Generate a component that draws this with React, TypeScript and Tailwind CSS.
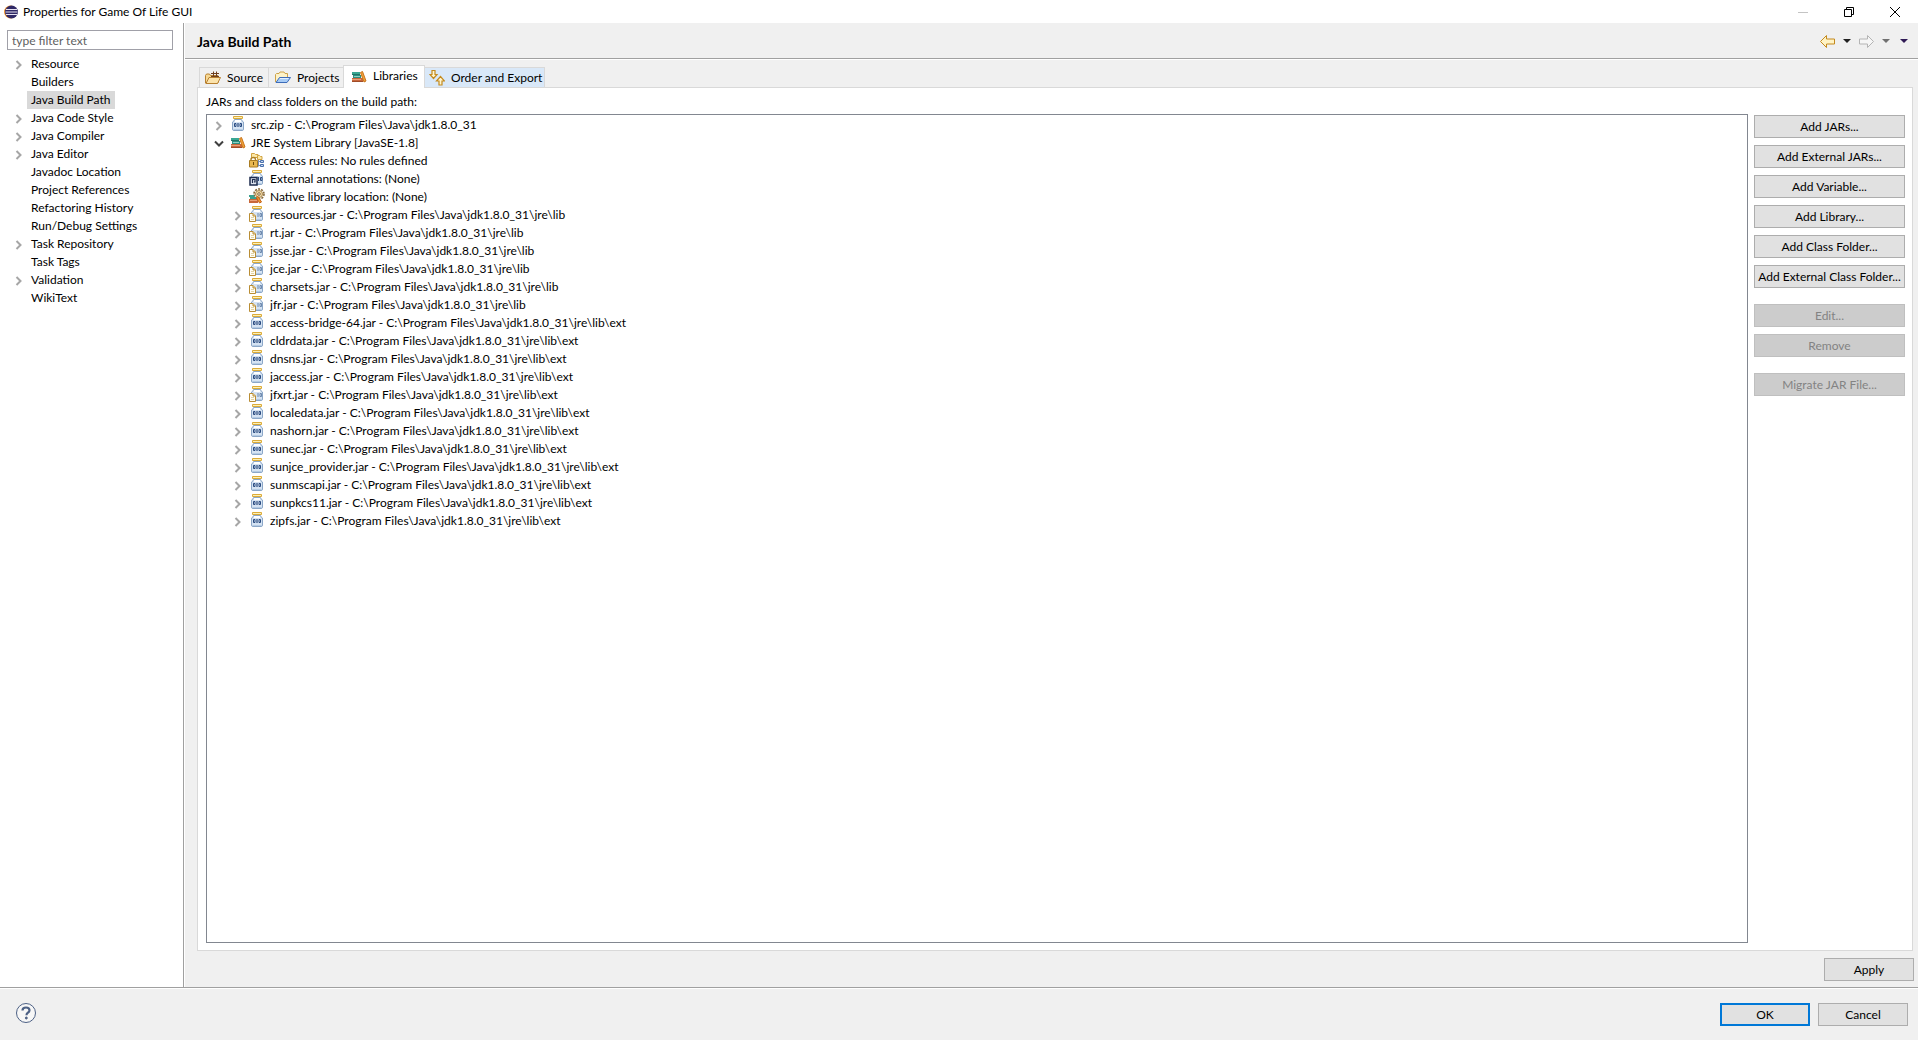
import type { ReactNode } from "react";

type Category = { label: string; expandable?: boolean; selected?: boolean };

const categories: Category[] = [
  { label: "Resource", expandable: true },
  { label: "Builders" },
  { label: "Java Build Path", selected: true },
  { label: "Java Code Style", expandable: true },
  { label: "Java Compiler", expandable: true },
  { label: "Java Editor", expandable: true },
  { label: "Javadoc Location" },
  { label: "Project References" },
  { label: "Refactoring History" },
  { label: "Run/Debug Settings" },
  { label: "Task Repository", expandable: true },
  { label: "Task Tags" },
  { label: "Validation", expandable: true },
  { label: "WikiText" },
];

const LIB = "C:\\Program Files\\Java\\jdk1.8.0_31\\jre\\lib";
const EXT = LIB + "\\ext";

const jars = [
  { name: "resources.jar", path: LIB, source: true },
  { name: "rt.jar", path: LIB, source: true },
  { name: "jsse.jar", path: LIB, source: true },
  { name: "jce.jar", path: LIB, source: true },
  { name: "charsets.jar", path: LIB, source: true },
  { name: "jfr.jar", path: LIB, source: true },
  { name: "access-bridge-64.jar", path: EXT },
  { name: "cldrdata.jar", path: EXT },
  { name: "dnsns.jar", path: EXT },
  { name: "jaccess.jar", path: EXT },
  { name: "jfxrt.jar", path: EXT, source: true },
  { name: "localedata.jar", path: EXT },
  { name: "nashorn.jar", path: EXT },
  { name: "sunec.jar", path: EXT },
  { name: "sunjce_provider.jar", path: EXT },
  { name: "sunmscapi.jar", path: EXT },
  { name: "sunpkcs11.jar", path: EXT },
  { name: "zipfs.jar", path: EXT },
];

function Icon({ children }: { children: ReactNode }) {
  return (
    <svg width="16" height="16" viewBox="0 0 16 16" fill="none" className="shrink-0" aria-hidden="true">
      {children}
    </svg>
  );
}

function JarShape() {
  return (
    <>
      <path d="M4.500 3.500h7q0 1.500 2 2.500v7q0 1.500-1.500 1.500h-8q-1.500 0-1.500-1.500V6q2-1 2-2.500z" fill="#d5e3f3" stroke="#8ba7c8" />
      <path d="M5 5h6" stroke="#fff" strokeWidth="2" />
      <path d="M4 13.500h8" stroke="#b4cbe4" />
      <path d="M3.500.5h9v2h-9z" fill="#fdf0b4" stroke="#dcab38" />
    </>
  );
}

function JarIcon() {
  return (
    <Icon>
      <JarShape />
      <path d="M4.500 7.500h1.500v3H4.500zM10 7.500h1.500v3H10z" stroke="#2a4b80" />
      <path d="M8 7v4" stroke="#2a4b80" strokeWidth="1.200" />
    </Icon>
  );
}

function JarSourceIcon() {
  return (
    <Icon>
      <JarShape />
      <path d="M11 7.500h1.500v3H11zM9 7v4" stroke="#6d88ad" />
      <path d="M.5 7.500H4L6.500 10v5.500h-6z" fill="#fffdf4" stroke="#b98d34" />
      <path d="M4 7.500V10h2.500" fill="#f3dfa6" stroke="#b98d34" />
      <path d="M2 11.500h3M2 13.500h3" stroke="#e2d3a4" />
    </Icon>
  );
}

function AnnotationIcon() {
  return (
    <Icon>
      <JarShape />
      <path d="M11.500 7.500H13v3h-1.500zM9.500 7v4" stroke="#2a4b80" />
      <path d="M1 7.500h7V15H1z" fill="#dfe5ef" stroke="#1c2b4e" strokeWidth="1.500" />
      <path d="M3.500 13V9.500h2.500v2.500H5" stroke="#1c2b4e" strokeWidth="1.200" />
    </Icon>
  );
}

function LibraryIcon() {
  return (
    <Icon>
      <path d="M1 4h8v3H1z" fill="#3aa793" />
      <path d="M1 6.500h8" stroke="#1f7567" />
      <path d="M2 7h8v3H2z" fill="#2d8f80" />
      <path d="M3 8.500h6" stroke="#8dd0c3" />
      <path d="M1 10h11v4H1z" fill="#c7673c" />
      <path d="M1 11.500h9" stroke="#e9a17a" />
      <path d="M1 13.500h11" stroke="#a04c28" />
      <path d="M9.500 4.500l2-1 3.500 9.500-2 1z" fill="#f0a23a" stroke="#c9741b" />
    </Icon>
  );
}

function AccessIcon() {
  return (
    <Icon>
      <path d="M2.500 1.500h3l1 1H9v3H2.500z" fill="#fce7a6" stroke="#d0a240" />
      <path d="M8.500 3.500h2l1 1H13v3H8.500z" fill="#fce7a6" stroke="#d0a240" />
      <path d="M9.500 8v6.500M9.500 9.500h2M9.500 13.500h2" stroke="#7b90b5" />
      <path d="M11.500 8.500h3v2h-3zM11.500 12.500h3v2h-3z" fill="#c3d6f0" stroke="#4a70ad" />
      <path d="M2 9V7.500Q2 5.500 4.250 5.500t2.250 2V9" stroke="#ad8026" strokeWidth="1.400" />
      <path d="M.5 8.500h8v6.500h-8z" fill="#e9b850" stroke="#a97c22" />
      <path d="M4.500 10v3" stroke="#6d4a0c" />
    </Icon>
  );
}

function NativeIcon() {
  return (
    <Icon>
      <circle cx="10" cy="6" r="5" stroke="#86683a" strokeWidth="1.600" strokeDasharray="2 1.140" />
      <circle cx="10" cy="6" r="3.500" fill="#f1dba8" stroke="#a9854a" />
      <circle cx="10" cy="6" r="1.300" fill="#fff" stroke="#86683a" />
      <path d="M0 7h5v2H0zM1 9h6v2H1z" fill="#3aa08f" />
      <path d="M0 11h9v4H0z" fill="#c8683a" />
      <path d="M1 12.500h7" stroke="#e9a17a" />
      <path d="M7.500 9.500l1.500-1 3.500 5.500-2 1z" fill="#f59a32" stroke="#c4651b" />
    </Icon>
  );
}

function SourceTabIcon() {
  return (
    <Icon>
      <path d="M.5 13V5.500l1-1.500h3l1 1.500H13v7.500z" fill="#f6d894" stroke="#b8802f" />
      <path d="M6 3.500h8M6 6.500h8M8.500 1.500v6M11.500 1.500v6" stroke="#6e4020" />
      <path d="M1 13.500l3-6h11.500l-3 6z" fill="#fbe3ac" stroke="#b8802f" />
    </Icon>
  );
}

function ProjectsTabIcon() {
  return (
    <Icon>
      <path d="M.5 12V4.500l1-1H4l1-1.500h4l1 1.500h2.500V8" fill="#fdf2c8" stroke="#cda24a" />
      <path d="M1 12.500l3.500-5h11l-3.500 5z" fill="#a8ccf6" stroke="#3d6cb9" />
      <path d="M5 8.500h8.500" stroke="#e3f0ff" />
    </Icon>
  );
}

function OrderTabIcon() {
  return (
    <Icon>
      <path d="M3 .5h3v4h2L4.500 8.500 1 4.500h2z" fill="#fff6cf" stroke="#c48a1e" strokeWidth="1.200" />
      <path d="M10 15h3v-4h2.500l-4-4.500-4 4.500H10z" fill="#fff6cf" stroke="#c48a1e" strokeWidth="1.200" />
    </Icon>
  );
}

function EclipseIcon() {
  return (
    <svg width="14" height="14" viewBox="0 0 14 14" className="shrink-0" aria-hidden="true">
      <circle cx="6.500" cy="7" r="6.500" fill="#f0932b" />
      <circle cx="7.500" cy="7" r="6.500" fill="#2f2866" />
      <path d="M2 4.500h11M1.500 7h12M2 9.500h11" stroke="#e6e2f2" />
    </svg>
  );
}

function Twisty({ open, name }: { open?: boolean; name: string }) {
  return (
    <button aria-label={(open ? "Collapse " : "Expand ") + name} className="w-4 h-[18px] pt-[2px] flex items-center justify-center shrink-0">
      <svg width="10" height="10" viewBox="0 0 10 10" fill="none" strokeWidth="2">
        {open ? <path d="M1 2.500l4 4 4-4" stroke="#404040" /> : <path d="M2.500 1l4 4-4 4" stroke="#a6a6a6" />}
      </svg>
    </button>
  );
}

function TreeRow({ icon, label, twisty }: { icon: ReactNode; label: string; twisty?: "open" | "closed" }) {
  return (
    <div className="flex items-center h-[18px]">
      {twisty ? <Twisty open={twisty === "open"} name={label} /> : <span className="w-4 shrink-0" />}
      <span className="ml-[3px] mr-[5px] self-start">{icon}</span>
      <span className="whitespace-pre">{label}</span>
    </div>
  );
}

function PushButton({ label, disabled, className = "" }: { label: string; disabled?: boolean; className?: string }) {
  return (
    <button
      disabled={disabled}
      className={"h-[23px] bg-[#e1e1e1] border border-[#adadad] whitespace-nowrap disabled:bg-[#cccccc] disabled:border-[#bfbfbf] disabled:text-[#838383] " + className}
    >
      {label}
    </button>
  );
}

function Tab({ icon, label, selected, className }: { icon: ReactNode; label: string; selected?: boolean; className: string }) {
  return (
    <button role="tab" aria-selected={!!selected} className={"flex items-center gap-[6px] border-[#d9d9d9] whitespace-nowrap " + className}>
      {icon}
      {label}
    </button>
  );
}

function TitleBar() {
  return (
    <header className="h-[23px] flex items-center justify-between bg-white shrink-0">
      <div className="flex items-center gap-[5px] pl-1">
        <EclipseIcon />
        <h1>Properties for Game Of Life GUI</h1>
      </div>
      <div className="flex">
        <button aria-label="Minimize" className="w-[46px] h-5 flex items-center justify-center">
          <svg width="10" height="10" stroke="#c4c4c4"><path d="M0 5.500h10" /></svg>
        </button>
        <button aria-label="Restore" className="w-[46px] h-5 flex items-center justify-center">
          <svg width="10" height="10" fill="none" stroke="#000"><path d="M.5 2.500h7v7h-7zM2.500 2.500v-2h7v7h-2" /></svg>
        </button>
        <button aria-label="Close" className="w-[46px] h-5 flex items-center justify-center">
          <svg width="10" height="10" stroke="#000"><path d="M0 0l10 10M10 0L0 10" /></svg>
        </button>
      </div>
    </header>
  );
}

function Caret({ color, name }: { color: string; name: string }) {
  return (
    <button aria-label={name} className="flex">
      <svg width="8" height="4" fill={color}><path d="M0 0h8l-4 4z" /></svg>
    </button>
  );
}

function Sidebar() {
  return (
    <nav className="w-[184px] shrink-0 bg-white border-r border-[#a0a0a0]">
      <div className="pl-[7px] pt-[7px] pr-[10px]">
        <input type="text" aria-label="Filter" placeholder="type filter text" className="block w-full h-5 border border-[#a0a0a8] px-1 placeholder:text-[#606060]" />
      </div>
      <ul className="pt-[5px] pl-[11px]">
        {categories.map((c) => (
          <li key={c.label} className="flex items-center h-[18px]">
            {c.expandable ? <Twisty name={c.label} /> : <span className="w-4 shrink-0" />}
            <a href="#" className={c.selected ? "px-1 bg-[#d9d9d9] leading-[18px]" : "px-1 leading-[18px]"}>{c.label}</a>
          </li>
        ))}
      </ul>
    </nav>
  );
}

function LibraryTree() {
  return (
    <div className="flex-1 border border-[#828790] bg-white pt-px pl-1">
      <TreeRow twisty="closed" icon={<JarIcon />} label={"src.zip - C:\\Program Files\\Java\\jdk1.8.0_31"} />
      <TreeRow twisty="open" icon={<LibraryIcon />} label="JRE System Library [JavaSE-1.8]" />
      <div className="pl-[19px]">
        <TreeRow icon={<AccessIcon />} label="Access rules: No rules defined" />
        <TreeRow icon={<AnnotationIcon />} label="External annotations: (None)" />
        <TreeRow icon={<NativeIcon />} label="Native library location: (None)" />
        {jars.map((jar) => (
          <TreeRow key={jar.name} twisty="closed" icon={jar.source ? <JarSourceIcon /> : <JarIcon />} label={jar.name + " - " + jar.path} />
        ))}
      </div>
    </div>
  );
}

export default function App() {
  return (
    <div className="min-h-screen flex flex-col bg-[#f0f0f0] text-black text-[12px] leading-4 font-['Lato',sans-serif]">
      <TitleBar />
      <div className="flex-1 flex">
        <Sidebar />
        <main className="flex-1 flex flex-col border-l border-white">
          <div className="h-9 flex items-center justify-between pl-3 pt-px pr-[10px] border-b border-[#a0a0a0]">
            <h2 className="font-bold text-[14px] pt-[2px]">Java Build Path</h2>
            <div className="flex items-center">
              <button aria-label="Back" className="mr-2">
                <svg width="15" height="13" fill="#fff3c4" stroke="#c48a1e"><path d="M.5 6.500l6-6v3.500h8v5h-8v3.500z" /></svg>
              </button>
              <Caret color="#202020" name="Back history" />
              <button aria-label="Forward" className="ml-2 mr-2">
                <svg width="15" height="13" fill="#f6f6f6" stroke="#b4b4b4"><path d="M14.500 6.500l-6-6v3.500h-8v5h8v3.500z" /></svg>
              </button>
              <Caret color="#707070" name="Forward history" />
              <span className="w-[10px]" />
              <Caret color="#2f1a55" name="View menu" />
            </div>
          </div>
          <div className="flex-1 flex flex-col border-t border-white pt-[5px] pl-3 pr-[5px]">
            <div role="tablist" className="flex items-end h-[23px] pl-[2px] -mb-px relative">
              <Tab label="Source" icon={<SourceTabIcon />} className="h-[21px] w-[69px] pl-[5px] border-t border-l" />
              <Tab label="Projects" icon={<ProjectsTabIcon />} className="h-[21px] w-[75px] pl-[6px] border-t border-l" />
              <Tab label="Libraries" selected icon={<LibraryIcon />} className="h-[23px] w-[82px] pl-[7px] pb-[3px] border-t border-x bg-white" />
              <Tab label="Order and Export" icon={<OrderTabIcon />} className="h-[21px] w-[120px] pl-[4px] border-y border-r bg-[#d9e8f8]" />
            </div>
            <section className="flex-1 flex flex-col bg-white border border-[#d9d9d9] pt-[6px] pl-2 pr-[7px] pb-[7px]">
              <p className="h-5 leading-4">JARs and class folders on the build path:</p>
              <div className="flex-1 flex gap-[6px]">
                <LibraryTree />
                <div className="w-[151px] flex flex-col gap-[7px] pt-px">
                  <PushButton label="Add JARs..." />
                  <PushButton label="Add External JARs..." />
                  <PushButton label="Add Variable..." />
                  <PushButton label="Add Library..." />
                  <PushButton label="Add Class Folder..." />
                  <PushButton label="Add External Class Folder..." />
                  <PushButton label="Edit..." disabled className="mt-[9px]" />
                  <PushButton label="Remove" disabled />
                  <PushButton label="Migrate JAR File..." disabled className="mt-[9px]" />
                </div>
              </div>
            </section>
          </div>
          <div className="flex justify-end pt-[7px] pb-[6px] pr-1">
            <PushButton label="Apply" className="w-[90px]" />
          </div>
        </main>
      </div>
      <footer className="border-t border-[#a0a0a0]">
        <div className="h-[52px] flex items-start border-t border-white pt-[14px] pl-4 pr-[10px] gap-2">
          <button aria-label="Help" className="mr-auto">
            <svg width="20" height="20" viewBox="0 0 20 20" fill="none" stroke="#4d6185">
              <circle cx="10" cy="10" r="9.500" fill="#f7f7f7" />
              <path d="M6.500 7.500q0-3 3.500-3t3.500 2.700q0 1.500-1.700 2.600-1.300.8-1.300 2.400" strokeWidth="2.200" />
              <circle cx="10.300" cy="15" r="1" fill="#4d6185" />
            </svg>
          </button>
          <button className="w-[90px] h-[23px] bg-[#e1e1e1] border-2 border-[#0078d7] leading-4">OK</button>
          <PushButton label="Cancel" className="w-[90px]" />
        </div>
      </footer>
    </div>
  );
}
